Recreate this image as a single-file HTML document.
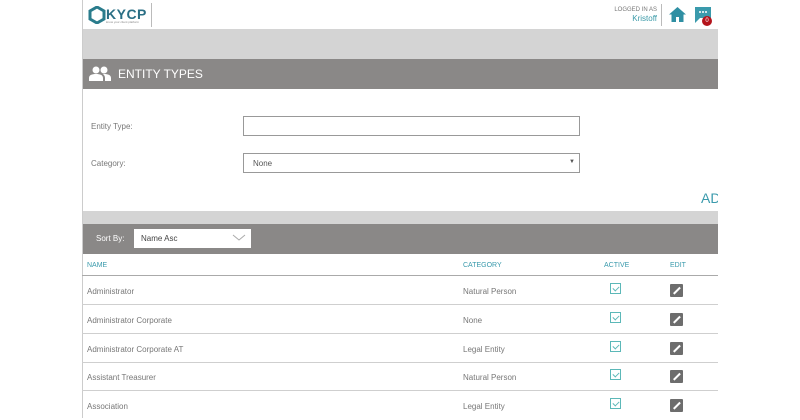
<!DOCTYPE html>
<html><head><meta charset="utf-8"><style>
*{margin:0;padding:0;box-sizing:border-box}
body{width:800px;height:418px;background:#fff;font-family:"Liberation Sans",sans-serif;position:relative;overflow:hidden;color:#666}
.a{position:absolute}
.row{position:absolute;left:82px;width:636px;height:29px;border-bottom:1px solid #cfcfcf;font-size:8px;color:#777}
.row span{position:absolute;top:11px}
.chk{position:absolute;left:528px;top:7px;width:11px;height:11px;border:1px solid #5cb8b8}
.chk:after{content:"";position:absolute;left:3px;top:1px;width:3px;height:5px;border:solid #5cb8b8;border-width:0 1px 1px 0;transform:rotate(45deg)}
.ed{position:absolute;left:588px;top:8px;width:13px;height:13px;background:#6d6d6d;border-radius:1px}
.ed:after{content:"";position:absolute;left:6px;top:2px;width:1.5px;height:9px;background:#fff;transform:rotate(45deg)}
</style></head><body>
<div class="a" style="left:82px;top:0;width:1px;height:418px;background:#ccc"></div>
<svg class="a" style="left:88px;top:6px" width="18" height="18" viewBox="0 0 18 18"><polygon points="9,1 16,5 16,13 9,17 2,13 2,5" fill="none" stroke="#2a7c8c" stroke-width="3"/></svg>
<div class="a" style="left:106px;top:6px;font-size:14px;font-weight:bold;color:#2a6f85;letter-spacing:.5px">KYCP</div>
<div class="a" style="left:106px;top:20px;font-size:3px;color:#888">know your client platform</div>
<div class="a" style="left:151px;top:3px;width:1px;height:24px;background:#bbb"></div>
<div class="a" style="left:590px;top:7px;width:67px;text-align:right;font-size:6px;color:#777">LOGGED IN AS</div>
<div class="a" style="left:590px;top:14px;width:67px;text-align:right;font-size:8px;color:#3a9aa8">Kristoff</div>
<div class="a" style="left:661px;top:4px;width:1px;height:22px;background:#bbb"></div>
<svg class="a" style="left:669px;top:7px" width="17" height="15" viewBox="0 0 17 15"><path d="M8.5 0L0 7.5h2.5V15h4.5V10h3v5h4.5V7.5H17z" fill="#2f8fa3"/></svg>
<svg class="a" style="left:695px;top:7px" width="17" height="17" viewBox="0 0 17 17"><path d="M0 0h16v11H5l-5 5z" fill="#3a9aac"/><circle cx="5" cy="5" r="1" fill="#fff"/><circle cx="8" cy="5" r="1" fill="#fff"/><circle cx="11" cy="5" r="1" fill="#fff"/></svg>
<div class="a" style="left:702px;top:16px;width:10px;height:10px;border-radius:50%;background:#b4141c;color:#fff;font-size:6px;text-align:center;line-height:10px">0</div>
<div class="a" style="left:83px;top:29px;width:635px;height:30px;background:#d4d4d4"></div>
<div class="a" style="left:83px;top:59px;width:635px;height:30px;background:#8a8887"></div>
<svg class="a" style="left:89px;top:66px" width="22" height="15" viewBox="0 0 22 15"><circle cx="7" cy="4" r="3.5" fill="#fff"/><circle cx="15" cy="4" r="3.5" fill="#fff"/><path d="M0 15v-3c0-3 3-4 7-4s7 1 7 4v3z M15 8c4 0 7 1 7 4v3h-6v-3c0-2-1-3-2-4z" fill="#fff"/></svg>
<div class="a" style="left:118px;top:67px;font-size:12px;color:#fff">ENTITY TYPES</div>
<div class="a" style="left:91px;top:122px;font-size:8px;color:#777">Entity Type:</div>
<div class="a" style="left:243px;top:116px;width:337px;height:20px;border:1px solid #999"></div>
<div class="a" style="left:91px;top:159px;font-size:8px;color:#777">Category:</div>
<div class="a" style="left:243px;top:153px;width:337px;height:20px;border:1px solid #999"></div>
<div class="a" style="left:253px;top:159px;font-size:8px;color:#555">None</div>
<div class="a" style="left:569px;top:159px;font-size:6px;color:#555">▼</div>
<div class="a" style="left:83px;top:189px;width:635px;height:22px;overflow:hidden"><div class="a" style="left:618px;top:1px;font-size:14px;color:#3a9aac">ADD</div></div>
<div class="a" style="left:83px;top:211px;width:635px;height:13px;background:#d4d4d4"></div>
<div class="a" style="left:83px;top:224px;width:635px;height:30px;background:#8a8887"></div>
<div class="a" style="left:96px;top:234px;font-size:8px;color:#fff">Sort By:</div>
<div class="a" style="left:134px;top:229px;width:117px;height:19px;background:#fff"></div>
<div class="a" style="left:141px;top:234px;font-size:8px;color:#444">Name Asc</div>
<svg class="a" style="left:232px;top:234px" width="14" height="8"><path d="M1 1l6 5 6-5" fill="none" stroke="#aaa"/></svg>
<div class="row" style="top:254px;height:22px;border-bottom:1px solid #aaa;color:#3a9aac;font-size:7px"><span style="left:5px;top:8px">NAME</span><span style="left:381px;top:8px">CATEGORY</span><span style="left:522px;top:8px">ACTIVE</span><span style="left:588px;top:8px">EDIT</span></div>
<div class="row" style="top:276px"><span style="left:5px">Administrator</span><span style="left:381px">Natural Person</span><div class="chk"></div><div class="ed"></div></div>
<div class="row" style="top:305px"><span style="left:5px">Administrator Corporate</span><span style="left:381px">None</span><div class="chk"></div><div class="ed"></div></div>
<div class="row" style="top:334px"><span style="left:5px">Administrator Corporate AT</span><span style="left:381px">Legal Entity</span><div class="chk"></div><div class="ed"></div></div>
<div class="row" style="top:362px"><span style="left:5px">Assistant Treasurer</span><span style="left:381px">Natural Person</span><div class="chk"></div><div class="ed"></div></div>
<div class="row" style="top:391px;border:none"><span style="left:5px">Association</span><span style="left:381px">Legal Entity</span><div class="chk"></div><div class="ed"></div></div>
</body></html>
